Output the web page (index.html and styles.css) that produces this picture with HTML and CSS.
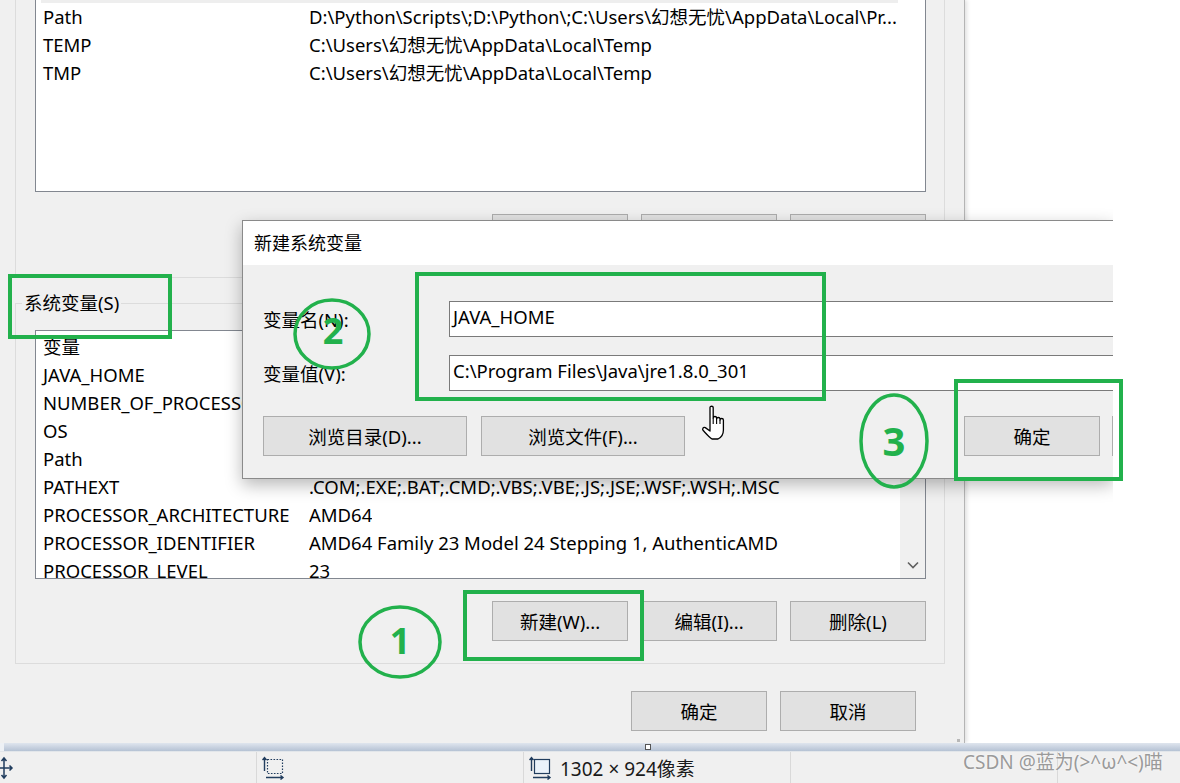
FILE: index.html
```html
<!doctype html>
<html>
<head>
  <meta charset="utf-8">
  <title>环境变量</title>
  <link rel="stylesheet" href="styles.css">
</head>
<body>
  <div class="screen">
    <div class="workspace">
      <section class="envwin">
        <div class="group group-user">
          <div class="listbox listbox-user">
            <div class="rows">
              <div class="row-sel"></div>
              <div class="row"><span class="c-name">Path</span><span class="c-val">D:\Python\Scripts\;D:\Python\;C:\Users\幻想无忧\AppData\Local\Pr...</span></div>
              <div class="row"><span class="c-name">TEMP</span><span class="c-val">C:\Users\幻想无忧\AppData\Local\Temp</span></div>
              <div class="row"><span class="c-name">TMP</span><span class="c-val">C:\Users\幻想无忧\AppData\Local\Temp</span></div>
            </div>
          </div>
          <div class="btnrow btnrow-group">
            <button class="btn">新建(N)...</button>
            <button class="btn">编辑(E)...</button>
            <button class="btn">删除(D)</button>
          </div>
        </div>

        <div class="group group-sys">
          <div class="group-title">系统变量(S)</div>
          <div class="listbox listbox-sys">
            <div class="rows">
              <div class="row"><span class="c-name">变量</span><span class="c-val"></span></div>
              <div class="row"><span class="c-name">JAVA_HOME</span><span class="c-val"></span></div>
              <div class="row"><span class="c-name">NUMBER_OF_PROCESSORS</span><span class="c-val"></span></div>
              <div class="row"><span class="c-name">OS</span><span class="c-val"></span></div>
              <div class="row"><span class="c-name">Path</span><span class="c-val"></span></div>
              <div class="row"><span class="c-name">PATHEXT</span><span class="c-val">.COM;.EXE;.BAT;.CMD;.VBS;.VBE;.JS;.JSE;.WSF;.WSH;.MSC</span></div>
              <div class="row"><span class="c-name">PROCESSOR_ARCHITECTURE</span><span class="c-val">AMD64</span></div>
              <div class="row"><span class="c-name">PROCESSOR_IDENTIFIER</span><span class="c-val">AMD64 Family 23 Model 24 Stepping 1, AuthenticAMD</span></div>
              <div class="row"><span class="c-name">PROCESSOR_LEVEL</span><span class="c-val">23</span></div>
            </div>
            <div class="vscroll">
              <svg class="vscroll-arrow" width="12" height="8" viewBox="0 0 12 8"><path d="M1 1.5 L6 6.5 L11 1.5" fill="none" stroke="#606060" stroke-width="1.6"/></svg>
            </div>
          </div>
          <div class="btnrow btnrow-group">
            <button class="btn">新建(W)...</button>
            <button class="btn">编辑(I)...</button>
            <button class="btn">删除(L)</button>
          </div>
        </div>

        <div class="btnrow btnrow-main">
          <button class="btn">确定</button>
          <button class="btn">取消</button>
        </div>
        <span class="resize-dot"></span>
      </section>
    </div>

    <div class="hrule"><span class="hrule-grip"></span></div>

    <footer class="statusbar">
      <div class="cell cell-first">
        <svg class="ico ico-move" width="18" height="24" viewBox="0 0 18 24">
          <path d="M6 2 V22 M3.5 5 L6 2 L8.5 5 M3.5 19 L6 22 L8.5 19 M0 12 H14 M11.5 9.5 L14 12 L11.5 14.5" fill="none" stroke="#213d5e" stroke-width="1.5"/>
        </svg>
      </div>
      <div class="cell">
        <svg class="ico" width="24" height="24" viewBox="0 0 24 24">
          <path d="M2.5 2 V15 M0.5 4 L2.5 1.5 L4.5 4 M4 21.5 H21 M18.5 19.5 L21 21.5 L18.5 23.5" fill="none" stroke="#213d5e" stroke-width="1.4"/>
          <rect x="5.5" y="3.5" width="15" height="14" fill="none" stroke="#213d5e" stroke-width="1.2" stroke-dasharray="1.6 1.4"/>
        </svg>
      </div>
      <div class="cell">
        <svg class="ico" width="24" height="24" viewBox="0 0 24 24">
          <path d="M2.5 2 V15 M0.5 4 L2.5 1.5 L4.5 4 M4 21.5 H21 M18.5 19.5 L21 21.5 L18.5 23.5" fill="none" stroke="#213d5e" stroke-width="1.4"/>
          <rect x="5.5" y="3.5" width="15" height="14" fill="#eaf2fa" stroke="#213d5e" stroke-width="1.2"/>
        </svg>
        <span class="status-text">1302 × 924像素</span>
      </div>
      <div class="cell"></div>
      <div class="cell cell-last"></div>
    </footer>
  </div>

  <div class="dialog-clip">
    <div class="dialog">
      <div class="dialog-title">新建系统变量</div>
      <div class="dialog-body">
        <div class="form">
          <label class="form-label">变量名(N):</label>
          <div class="input">JAVA_HOME</div>
          <label class="form-label">变量值(V):</label>
          <div class="input">C:\Program Files\Java\jre1.8.0_301</div>
        </div>
        <div class="btnrow btnrow-dialog">
          <button class="btn btn-wide">浏览目录(D)...</button>
          <button class="btn btn-wide">浏览文件(F)...</button>
          <span class="spacer"></span>
          <button class="btn">确定</button>
          <button class="btn">取消</button>
        </div>
      </div>
    </div>
  </div>

  <svg class="marks" width="1180" height="783" viewBox="0 0 1180 783">
    <g fill="none" stroke="#22b14c">
      <rect x="10" y="276" width="160" height="61" stroke-width="4"/>
      <rect x="417" y="274" width="407" height="125" stroke-width="4"/>
      <rect x="956" y="381" width="165" height="98" stroke-width="4"/>
      <rect x="465" y="592" width="177" height="67" stroke-width="4"/>
      <ellipse cx="332" cy="334" rx="37" ry="34" stroke-width="3.5"/>
      <ellipse cx="894" cy="441" rx="33" ry="46" stroke-width="3.5"/>
      <ellipse cx="400" cy="642" rx="40" ry="35" stroke-width="3.5"/>
    </g>
    <g class="mark-num" fill="#22b14c" text-anchor="middle">
      <text x="333" y="344">2</text>
      <text x="400" y="654">1</text>
      <text x="894" y="456" class="mark-num-big">3</text>
    </g>
  </svg>

  <svg class="pointer" width="30" height="38" viewBox="0 0 30 38">
    <path d="M9 2.5 C9 0.8 12.2 0.8 12.2 2.5 L12.2 13 C12.2 11 15.6 11 15.6 13 L15.6 14 C15.6 12 19 12 19 14 L19 15 C19 13 22.4 13 22.4 15 L22.4 25 C22.4 29 20 32.5 17 34 L11 34 C8 32 5 28.5 2.2 25.5 C0.8 24 2.3 21.6 4.3 22.6 L9 26 Z" fill="#fff" stroke="#000" stroke-width="1.3" stroke-linejoin="round"/>
    <path d="M12.2 13 V19 M15.6 14 V19 M19 15 V19" fill="none" stroke="#000" stroke-width="1.1"/>
  </svg>

  <div class="watermark">CSDN @蓝为(&gt;^ω^&lt;)喵</div>
</body>
</html>
```

FILE: styles.css
```css
* { box-sizing: border-box; }
html, body { margin: 0; padding: 0; }
body {
  width: 1180px;
  height: 783px;
  overflow: hidden;
  position: relative;
  background: #fff;
  color: #000;
  font-family: "Noto Sans", "Noto Sans CJK SC", sans-serif;
  font-size: 18.5px;
}

.screen { display: flex; flex-direction: column; height: 783px; }
.workspace { display: flex; height: 743px; }

/* background window: Environment Variables */
.envwin {
  position: relative;
  width: 965px;
  height: 743px;
  background: #f0f0f0;
  border-right: 1px solid #b4b4b4;
  box-shadow: 2px 0 4px rgba(0, 0, 0, 0.12);
  display: flex;
  flex-direction: column;
}
.group {
  margin-left: 15px;
  width: 930px;
  border: 1px solid #dcdcdc;
}
.group-user {
  border-top: none;
  height: 278px;
  padding-bottom: 22px;
}
.group-sys {
  margin-top: 25px;
  height: 361px;
}
.group-title {
  display: block;
  width: max-content;
  margin: -13px 0 0 6px;
  padding: 0 2px;
  line-height: 24px;
  background: #f0f0f0;
}

.listbox {
  margin-left: 19px;
  width: 891px;
  background: #fff;
  border: 1px solid #828790;
  display: flex;
}
.listbox-user { height: 192px; border-top: none; }
.listbox-sys { height: 249px; margin-top: 15px; overflow: hidden; }
.rows { flex: 1; overflow: hidden; }
.row-sel { height: 3px; width: 857px; margin-left: 5px; background: #eeeeee; }
.row {
  display: flex;
  height: 28px;
  line-height: 28px;
  white-space: nowrap;
}
.listbox-sys .row:first-child { margin-top: 2px; }
.c-name { width: 273px; padding-left: 7px; overflow: hidden; flex: none; }
.c-val { overflow: hidden; }
.vscroll {
  width: 25px;
  background: #f0f0f0;
  display: flex;
  align-items: flex-end;
  justify-content: center;
  padding-bottom: 9px;
}

.btnrow { display: flex; }
.btnrow-group {
  justify-content: flex-end;
  gap: 13px;
  padding-right: 18px;
  margin-top: 22px;
}
.btnrow-main {
  justify-content: flex-end;
  gap: 13px;
  padding-right: 48px;
  margin-top: 27px;
}
.btn {
  width: 136px;
  height: 40px;
  padding: 0;
  background: #e1e1e1;
  border: 1px solid #adadad;
  font: inherit;
  color: #000;
}
.resize-dot {
  position: absolute;
  right: 4px;
  bottom: 1px;
  width: 3px;
  height: 3px;
  background: #b8b8b8;
}

/* paint window chrome */
.hrule {
  position: relative;
  height: 8px;
  background: linear-gradient(#dfe5ee, #b5c2d4);
  border-left: 4px solid #eef1f5;
}
.hrule-grip {
  position: absolute;
  left: 641px;
  top: 1px;
  width: 6px;
  height: 6px;
  background: #fff;
  border: 1px solid #555;
}
.statusbar {
  display: flex;
  height: 32px;
  background: #f0f0f0;
  border-top: 1px solid #e2e6ea;
}
.cell {
  width: 267px;
  border-right: 1px solid #d9d9d9;
  display: flex;
  align-items: center;
  padding-left: 5px;
  flex: none;
}
.cell-first { width: 259px; padding-left: 0; margin-left: -2px; }
.cell-last { flex: 1; border-right: none; }
.ico { flex: none; }
.status-text {
  margin-left: 7px;
  font-size: 19px;
  color: #1a1a1a;
}

/* new system variable dialog */
.dialog-clip {
  position: absolute;
  left: 242px;
  top: 220px;
  width: 871px;
  height: 259px;
  overflow: hidden;
  box-shadow: 0 6px 16px rgba(0, 0, 0, 0.28);
  clip-path: inset(-30px 0 -30px -30px);
}
.dialog {
  width: 1026px;
  height: 259px;
  border: 1px solid #8a8a8a;
  background: #f0f0f0;
  display: flex;
  flex-direction: column;
}
.dialog-title {
  height: 44px;
  line-height: 44px;
  padding-left: 11px;
  background: #fff;
  font-size: 18px;
}
.dialog-body { padding: 36px 19px 0 20px; }
.form {
  display: grid;
  grid-template-columns: 186px 1fr;
  row-gap: 18px;
  align-items: center;
}
.form-label { white-space: nowrap; }
.input {
  height: 36px;
  line-height: 30px;
  padding-left: 3px;
  background: #fff;
  border: 1px solid #7a7a7a;
  white-space: nowrap;
}
.btnrow-dialog { margin-top: 25px; gap: 14px; }
.btnrow-dialog .spacer { flex: 1; }
.btnrow-dialog .btn + .btn:last-child { margin-left: -2px; }
.btn-wide { width: 204px; }

/* annotations */
.marks { position: absolute; left: 0; top: 0; pointer-events: none; }
.mark-num { font-family: "Noto Sans", sans-serif; font-weight: 700; font-size: 36px; }
.mark-num .mark-num-big { font-size: 40px; }
.pointer { position: absolute; left: 701px; top: 405px; }

.watermark {
  position: absolute;
  left: 963px;
  top: 749px;
  font-size: 19px;
  line-height: 26px;
  color: #9a9a9a;
  text-shadow: 0 0 2px #fff;
  white-space: nowrap;
}
```
